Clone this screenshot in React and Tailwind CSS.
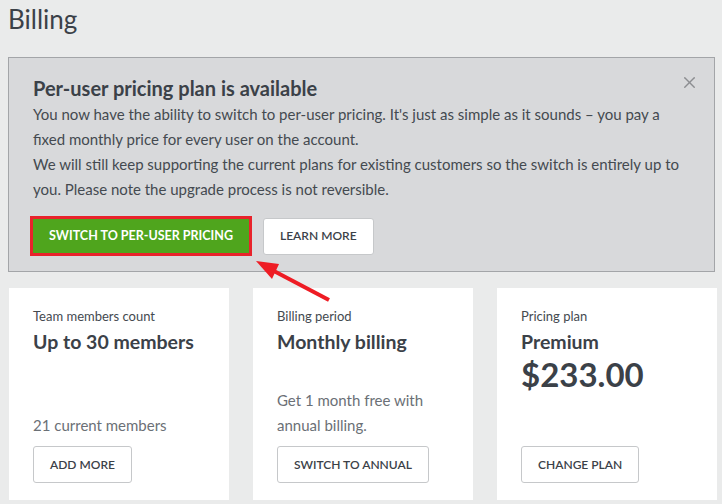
import { X } from 'lucide-react';

const font = { fontFamily: 'Lato, "Noto Sans", sans-serif' };

function Card({ label, title, children, action }) {
  return (
    <div className="w-[220px] h-[212px] bg-white px-6 pt-[18px] pb-[17px] flex flex-col">
      <div className="text-[13px] leading-5 text-[#444a50]">{label}</div>
      <div className="mt-[4px] text-[19.5px] leading-6 font-bold text-[#3b4148]">{title}</div>
      <div className="flex-1 flex flex-col">{children}</div>
      <div>
        <button className="h-[37px] px-4 border border-[#c6c8ca] rounded-[3px] bg-white text-[12px] font-semibold uppercase text-[#3b4148]">
          {action}
        </button>
      </div>
    </div>
  );
}

export default function App() {
  return (
    <div className="relative min-h-screen bg-[#eaebeb] pl-2 pt-[3px]" style={font}>
      <h1 className="text-[26px] leading-[32px] text-[#3b4148]">Billing</h1>

      <div className="relative mt-[22px] w-[707px] border border-[#a3a5a8] bg-[#d8d9db] pl-6 pr-6 pt-[16px] pb-[15px]">
        <button className="absolute right-[15px] top-[15px] text-[#8c8e91]">
          <X size={19} strokeWidth={1.75} />
        </button>
        <h2 className="text-[20px] leading-7 font-bold text-[#3b4148]">Per-user pricing plan is available</h2>
        <p className="text-[15px] leading-[25px] text-[#444a50] whitespace-nowrap">
          You now have the ability to switch to per-user pricing. It's just as simple as it sounds – you pay a
          <br />
          fixed monthly price for every user on the account.
          <br />
          We will still keep supporting the current plans for existing customers so the switch is entirely up to
          <br />
          you. Please note the upgrade process is not reversible.
        </p>
        <div className="mt-[14px] flex items-center gap-[11px] -ml-[3px]">
          <div className="border-[3px] border-[#e8232b]">
            <button className="h-[34px] w-[216px] bg-[#4fa51d] text-white text-[12.5px] font-bold uppercase">
              Switch to per-user pricing
            </button>
          </div>
          <button className="h-[37px] px-4 bg-white border border-[#c6c8ca] rounded-[3px] text-[12px] font-semibold uppercase text-[#3b4148]">
            Learn more
          </button>
        </div>
      </div>

      <div className="mt-4 ml-px flex gap-6">
        <Card label="Team members count" title="Up to 30 members" action="Add more">
          <div className="mt-auto mb-[8px] text-[15px] leading-[25px] text-[#6b7076]">21 current members</div>
        </Card>
        <Card label="Billing period" title="Monthly billing" action="Switch to annual">
          <div className="mt-auto mb-[8px] text-[15px] leading-[25px] text-[#6b7076]">
            Get 1 month free with
            <br />
            annual billing.
          </div>
        </Card>
        <Card label="Pricing plan" title="Premium" action="Change plan">
          <div className="text-[33px] leading-[40px] font-bold text-[#3b4148]">$233.00</div>
        </Card>
      </div>

      <svg className="absolute left-0 top-0 pointer-events-none" width="722" height="504">
        <line x1="329" y1="300" x2="272" y2="270" stroke="#ee1c24" strokeWidth="4" />
        <polygon points="256,261 279,264 272,279" fill="#ee1c24" />
      </svg>
    </div>
  );
}
